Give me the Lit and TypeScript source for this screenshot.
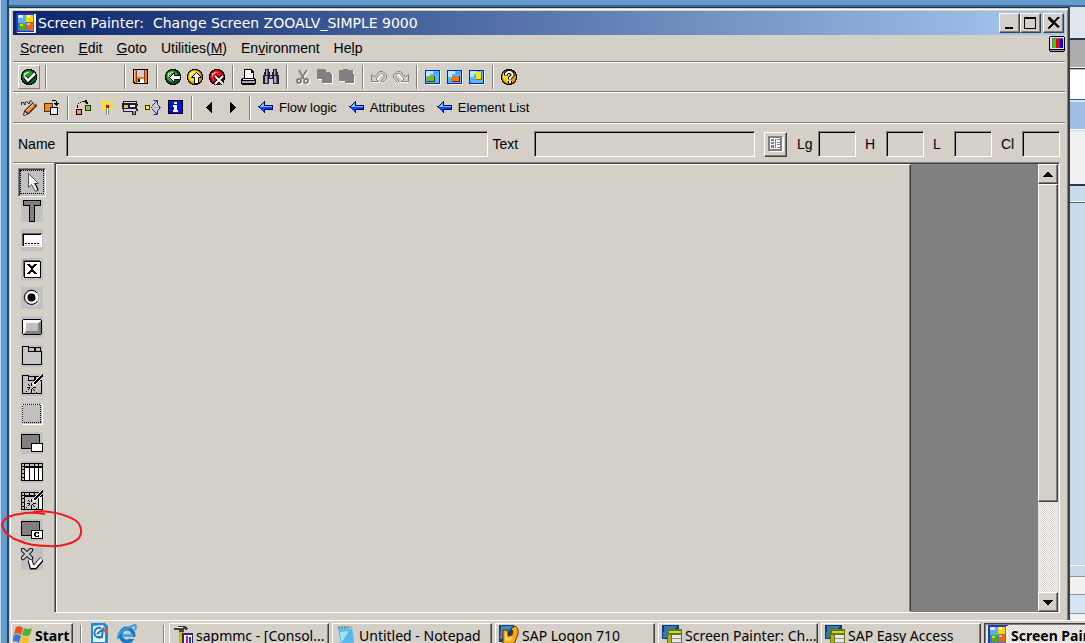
import { LitElement, html, svg, css, SVGTemplateResult, TemplateResult } from "lit";
import { customElement, property } from "lit/decorators.js";

type Glyph = { size: number; smooth?: boolean; art: SVGTemplateResult };

const ball = (dark: string, mid: string, light: string) => svg`
  <path d="M5 0h6v1h2v1h1v1h1v2h1v6h-1v2h-1v1h-1v1h-2v1H5v-1H3v-1H2v-1H1v-2H0V5h1V3h1V2h1V1h2z" fill="#000"/>
  <circle cx="8" cy="8" r="7" fill="${dark}"/>
  <circle cx="7" cy="7" r="5.5" fill="${mid}"/>
  <path d="M3 4h2v-1h3v1h-2v1h-1v1h-1v2h-1z" fill="${light}"/>`;

const framed = (inner: SVGTemplateResult) => svg`
  <path d="M15 2h1v14H2v-1h13z" fill="#fff"/>
  <path d="M0 1h15v14H0z" fill="#0020c8"/>
  <path d="M1 2h13v12H1z" fill="#58b8ff"/>
  <path d="M1 2h7v3H5v3H1z" fill="#b8e8ff"/>
  <path d="M9 4h1v1h-1zM11 3h1v1h-1zM4 10h1v1h-1zM2 12h1v1h-1zM6 7h1v1h-1z" fill="#1878e8"/>
  ${inner}`;

const tile = (inner: SVGTemplateResult) => svg`<path d="M0 0h22v22H0z" fill="#c0c0c0"/>${inner}`;

const wand = svg`
  <path d="M22 1L12 11" stroke="#fff" stroke-width="4"/>
  <path d="M22 1L13 10" stroke="#000" stroke-width="2"/>
  <path d="M10 9v3M10 15v4M6 13h3M12 13h3M7 10l2 2M7 16l2-2M12 15l2 2" stroke="#000"/>
  <path d="M8 11h1v1h-1zM11 14h1v1h-1zM5 17h1v1h-1zM15 18h1v1h-1z" fill="#000"/>`;

const sapSquares = svg`
  <path d="M0 0h20v20H0z" fill="#2038b8"/>
  <path d="M18 1h2v19H1v-1h17z" fill="#f0f0f0"/>
  <path d="M2 2h16v16H2z" fill="#4878c0"/>
  <path d="M2 2h8v8H2z" fill="#58b0f8"/><path d="M2 2h5v3H2z" fill="#d0f0ff"/>
  <path d="M10 2h7v7h-7z" fill="#ffd800"/><path d="M11 2h3v3h-3z" fill="#fff8a0"/>
  <path d="M4 10h6v7H4z" fill="#60a800"/><path d="M4 11h3v2H4z" fill="#b8e040"/>
  <path d="M11 10h6v7h-6z" fill="#ff6000"/><path d="M11 10h3v2h-3z" fill="#ffb060"/>`;

const sapWindow = svg`
  <path d="M0 0h17v14H0z" fill="#0c3c78"/><path d="M2 1h14L3 13H1z" fill="#3078b8"/>
  <path d="M5 4h15v16H5z" fill="#687800"/><path d="M7 6h12v2H7z" fill="#c8d050"/>
  <path d="M6 10h3v10H6z" fill="#a8b020"/><path d="M10 10h9v10h-9z" fill="#e8e8e8"/><path d="M10 13h9v1h-9zM10 17h9v1h-9z" fill="#909090"/>`;

const turn = svg`
  <path d="M1 6v8h8L6.500 11.500 11 6l2 2v2l-3 3 1 2 5-5V7l-4-5H9L4 9z" fill="#fff"/>
  <path d="M.5 5.500v7h7L5 10l4.500-5.500h2L13 6.500v2L10 12l1.500 1.500 4-4V6L12 2.500H8.500L3.500 8z" fill="#d4d0c8" stroke="#808080"/>`;

const glyphs: Record<string, Glyph> = {
  app: { size: 20, art: sapSquares },
  enter: { size: 16, smooth: true, art: svg`${ball("#006830", "#28a028", "#b8e8a0")}<path d="M4 8l3 4 7-7" fill="none" stroke="#000" stroke-width="4.500"/><path d="M4 8l3 3.500 7-7" fill="none" stroke="#fff" stroke-width="2.500"/>` },
  save: { size: 16, art: svg`<path d="M0 0h15v15H1v-1H0z" fill="#000"/><path d="M1 1h13v13H2v-1H1z" fill="#e88010"/><path d="M4 1h7v7H4z" fill="#d8c8e0"/><path d="M3 1h1v8h7V1h1v12h-1V9H4v4H3z" fill="#904000"/><path d="M5 10h6v4H5z" fill="#fff"/><path d="M5 10h2v3H5z" fill="#000"/><path d="M1 1h1v11H1z" fill="#ffc060"/>` },
  back: { size: 16, smooth: true, art: svg`${ball("#005838", "#38a828", "#a0e090")}<path d="M9.500 3.500v3h6v4h-6v3l-5-5z" fill="#fff" stroke="#000"/>` },
  up: { size: 16, smooth: true, art: svg`${ball("#f0a000", "#ffe000", "#fff8b0")}<path d="M9.500 3.500l5 5h-3v6h-4v-6h-3z" fill="#fff" stroke="#000"/>` },
  cancel: { size: 16, smooth: true, art: svg`${ball("#c00000", "#f01020", "#ff9090")}<path d="M6 7l8 8M14 7l-8 8" stroke="#000" stroke-width="4"/><path d="M6 7l8 8M14 7l-8 8" stroke="#fff" stroke-width="2"/>` },
  print: { size: 16, art: svg`<path d="M3 0h8v1h1v1h1v7h1v1h1v5h-1v1H1v-1H0v-5h1V9h2z" fill="#000"/><path d="M4 1h6v3h2v5H4z" fill="#fff"/><path d="M2 10h11v1H2z" fill="#f0f0f0"/><path d="M1 12h13v2H1z" fill="#a8a8c0"/>` },
  find: { size: 16, art: svg`<path d="M2 0h4v3h1v3h2V3h1V0h4v3h1v3h1v9h-6v-5H6v5H0V6h1V3h1z" fill="#202030"/><path d="M3 1h2v5H3zM11 1h2v5h-2zM2 7h3v7H2zM11 7h3v7h-3zM7 7h2v2H7z" fill="#a8a8d0"/><path d="M4 1h1v5H4zM12 1h1v5h-1zM4 7h1v7H4zM13 7h1v7h-1z" fill="#606080"/>` },
  cut: { size: 16, smooth: true, art: svg`<g transform="translate(1 1)" stroke="#fff" fill="none" stroke-width="2"><path d="M4 1l5 9M12 1L6 10"/><circle cx="4" cy="12" r="2"/><circle cx="11" cy="12" r="2"/></g><g stroke="#808080" fill="none" stroke-width="2"><path d="M4 1l5 9M12 1L6 10"/><circle cx="4" cy="12" r="2"/><circle cx="11" cy="12" r="2"/></g>` },
  copy: { size: 16, art: svg`<path d="M1 1h8v3h6l1 2v9H6v-4H1z" fill="#fff"/><path d="M0 0h8v1h1v2h4v1h1v1h1v9H5v-4H0z" fill="#808080"/>` },
  paste: { size: 16, art: svg`<path d="M1 2h14v5h1v8H7v-2H1z" fill="#fff"/><path d="M0 1h4V0h5v1h5v4h1v9H6v-2H0z" fill="#808080"/>` },
  undo: { size: 16, smooth: true, art: turn },
  redo: { size: 16, smooth: true, art: svg`<g transform="translate(16 0) scale(-1 1)">${turn}</g>` },
  viewGreen: { size: 16, art: framed(svg`<path d="M2 7h8v6H2z" fill="#284800"/><path d="M2 7h7v5H2z" fill="#88b800"/>`) },
  viewOrange: { size: 16, art: framed(svg`<path d="M5 7h8v6H5z" fill="#782000"/><path d="M5 7h7v5H5z" fill="#ff7010"/>`) },
  viewYellow: { size: 16, art: framed(svg`<path d="M7 3h6v8H7z" fill="#906000"/><path d="M7 3h5v7H7z" fill="#ffe800"/>`) },
  help: { size: 16, smooth: true, art: svg`${ball("#f09800", "#ffd820", "#fff8b0")}<path d="M5 6.500V4.500l2-1.500h2.500l2 2v1.500L9 9v1.500M9 12v2.500" fill="none" stroke="#000" stroke-width="4"/><path d="M5 6V4.500l2-1.500h2.500l2 2v1.500L9 9v1.500M9 12v2" fill="none" stroke="#fff" stroke-width="2"/>` },
  change: { size: 16, smooth: true, art: svg`<path d="M.5 5V2.500h2L4 5V2.500l2-1L8 4l1-3h2" fill="none" stroke="#202020"/><path d="M15 3l1 3-8 8-5 2-1-1 1-4 9-9z" fill="#402010"/><path d="M13 5L6 12" stroke="#f09030" stroke-width="3"/><path d="M12 4L5 11" stroke="#ffe0a0"/><path d="M4 12l2 2-3 1z" fill="#fff"/><path d="M12 3l2-1 1 2-1 1z" fill="#e8d8ff"/>` },
  otherObject: { size: 16, art: svg`<path d="M0 3h9v9H0z" fill="#5c2800"/><path d="M1 4h7v7H1z" fill="#f08820"/><path d="M6 7h8v8H6z" fill="#000"/><path d="M7 8h6v6H7z" fill="#d8f0ff"/><path d="M8 0h4v1h1v2h2v1h-1v1h-1v1h-1V5h-1V4h-1V3h2V1H8z" fill="#000"/>` },
  check: { size: 16, art: svg`<path d="M0 9h6v6H0z" fill="#000"/><path d="M1 10h4v4H1z" fill="#ff9830"/><path d="M9 5h6v6H9z" fill="#203800"/><path d="M10 6h4v4h-4z" fill="#98c040"/><path d="M1 5h1v3H1zM2 3h1v1H2zM4 2h1v1H4zM6 1h5v1H6zM9 0h1v3H9zM10 0h1v4h-1zM11 2h1v2h-1z" fill="#000"/>` },
  activate: { size: 16, art: svg`<path d="M8 0v4M3 1l3 3M13 1l-3 3M2 6h4M10 6h4M3 11l3-3M13 11l-3-3" stroke="#f8f000" stroke-width="1.500"/><path d="M7 7h3v8H7z" fill="#7090a0"/><path d="M8 8h1v7H8z" fill="#fff"/><path d="M7 5h3v3H7z" fill="#e00000"/>` },
  test: { size: 16, art: svg`<path d="M1 1h14v3h1v2h-1v3h1v2h-2v4h-4v-3H1V9H0V3h1z" fill="#202030"/><path d="M2 2h12v1H2zM2 9h12v2H2z" fill="#d8d8e8"/><path d="M2 5h4v3H2z" fill="#f8b860"/><path d="M8 5h5v2H8z" fill="#f0f0f8"/><path d="M11 11h2v3h-2z" fill="#8090b0"/>` },
  whereUsed: { size: 16, smooth: true, art: svg`<path d="M6 7.500h9M7 6l5-5M7 9l5 5M8.500 .5h4v4M8.500 14.500h4v-4M12.500 4.500l3 3-3 3" fill="none" stroke="#1828a8"/><path d="M7 7h7v1H7z" fill="#90b0f0"/><path d="M0 5h5v5H0z" fill="#303000"/><path d="M1 6h3v3H1z" fill="#fff000"/>` },
  info: { size: 16, art: svg`<path d="M0 0h15v14H0z" fill="#000"/><path d="M1 1h13v12H1z" fill="#0010e8"/><path d="M6 2h3v2H6zM5 5h4v5h1v2H5v-2h1V7H5z" fill="#fff"/>` },
  prev: { size: 16, art: svg`<path d="M11 2v11h-1v-1H9v-1H8v-1H7V9H6V8H5V7h1V6h1V5h1V4h1V3h1V2z" fill="#000"/>` },
  next: { size: 16, art: svg`<path d="M5 2v11h1v-1h1v-1h1v-1h1V9h1V8h1V7h-1V6H9V5H8V4H7V3H6V2z" fill="#000"/>` },
  arrow: { size: 16, art: svg`<path d="M7 1v4h8v5H7v3H6v-1H5v-1H4v-1H3V9H2V8H1V7H0V6h2V5h1V4h1V3h1V2h1V1z" fill="#000060"/><path d="M6 3v3h8v1H2V6h1V5h1V4h1V3z" fill="#68c8ff"/><path d="M2 7h12v2H6v3H5v-1H4v-1H3V9H2z" fill="#1040f0"/>` },
  monitor: { size: 16, art: svg`<path d="M1 0h14v1h1v14h-1v1H1v-1H0V1h1z" fill="#000"/><path d="M1 1h14v12H1z" fill="#e0e0e8"/><path d="M3 2h11v10H3z" fill="#707070"/><path d="M4 3h3v9H4z" fill="#00f000"/><path d="M7 3h4v9H7z" fill="#f00000"/><path d="M11 3h3v9h-3z" fill="#0000f0"/><path d="M1 14h14v1H1z" fill="#9898d0"/>` },
  list: { size: 16, art: svg`<path d="M1 1h15v15H1z" fill="#fff"/><path d="M0 0h14v15H0z" fill="#808080"/><path d="M2 2h10v11H2z" fill="#fff"/><path d="M3 3h3v2H3zM3 6h3v2H3zM3 9h3v3H3zM7 3h1v9H7zM9 3h3v1H9zM9 6h3v1H9zM9 8h3v1H9zM9 11h3v1H9z" fill="#808080"/>` },
  pointer: { size: 22, smooth: true, art: tile(svg`<path d="M7.500 2.500v14l3-3 4 7 2.500-1.500-3.500-6.500h4z" fill="#f8f8f8" stroke="#505050"/><path d="M14 12l3 6-1 2" fill="none" stroke="#000"/>`) },
  text: { size: 22, art: tile(svg`<path d="M2 0h18v6h-6v16H8V6H2z" fill="#000"/><path d="M3 1h16v4h-6v16H9V5H3z" fill="#808080"/>`) },
  entry: { size: 22, art: tile(svg`<path d="M1 4h20v14H1z" fill="#fff"/><path d="M1 4h20v1H2v12H1z" fill="#606060"/><path d="M2 5h18v1H3v11H2z" fill="#000"/><path d="M3 16h17v1H3z" fill="#d8d8d8"/><path d="M4 14h2v1H4zM7 14h2v1H7zM10 14h2v1h-2zM13 14h2v1h-2zM16 14h2v1h-2z" fill="#000"/>`) },
  checkbox: { size: 22, art: tile(svg`<path d="M2 2h18v18H2z" fill="#fff"/><path d="M2 2h17v1H3v16H2z" fill="#606060"/><path d="M3 3h16v16H3z" fill="none" stroke="#000"/><path d="M6 6h3v1h1v1h2V7h1V6h3v1h-1v1h-1v1h-1v1h-1v2h1v1h1v1h1v1h1v1h-3v-1h-1v-1h-2v1H9v1H6v-1h1v-1h1v-1h1v-1h1v-2H9V9H8V8H7V7H6z" fill="#000"/>`) },
  radio: { size: 22, smooth: true, art: tile(svg`<circle cx="11" cy="11" r="8" fill="#fff"/><circle cx="10.500" cy="10.500" r="7.500" fill="none" stroke="#707070"/><path d="M16 6a7 7 0 1 0 .5 8" fill="none" stroke="#000"/><circle cx="10.500" cy="10.500" r="4" fill="#000"/>`) },
  push: { size: 22, art: tile(svg`<path d="M2 3h18v1h1v14h-1v1H2v-1H1V4h1z" fill="#000"/><path d="M2 4h18v14H2z" fill="#808080"/><path d="M2 4h18l-3 3H5v8l-3 3z" fill="#fff"/><path d="M5 7h12v8H5z" fill="#c0c0c0"/>`) },
  tabs: { size: 22, art: tile(svg`<path d="M2 2h5v4h13v13H2z" fill="#c8c8c8"/><path d="M1.500 1.500h6v5h13v13h-19zM8 2.500h5v4M14.500 6V2.500h5v4" fill="none" stroke="#000"/>`) },
  tabsWizard: { size: 22, art: tile(svg`<path d="M1.500 1.500h6v5h13v13h-19zM8 2.500h5v4M14.500 6V2.500h5v4" fill="none" stroke="#000"/>${wand}`) },
  group: { size: 22, art: tile(svg`<path d="M1 1h20v20H1z" fill="#c0c0c0" stroke="#fff"/><path d="M1.500 1.500h18v18h-18z" fill="none" stroke="#000" stroke-dasharray="1 1"/>`) },
  subscreen: { size: 22, art: tile(svg`<path d="M0 2h19v15H0z" fill="#000"/><path d="M1 3h17v13H1z" fill="#808080"/><path d="M10 11h12v9H10z" fill="#000"/><path d="M11 12h10v7H11z" fill="#fff"/>`) },
  table: { size: 22, art: tile(svg`<path d="M0 2h22v18H0z" fill="#000"/><path d="M1 3h2v2H1zM4 3h4v2H4zM9 3h4v2H9zM14 3h3v2h-3zM18 3h3v2h-3zM1 6h2v2H1zM1 9h2v3H1zM1 13h2v3H1zM1 17h2v2H1z" fill="#c0c0c0"/><path d="M4 7h4v12H4zM9 7h4v12H9zM14 7h3v12h-3zM18 7h3v12h-3z" fill="#fff"/>`) },
  tableWizard: { size: 22, art: tile(svg`<path d="M0 2h22v18H0z" fill="#000"/><path d="M1 3h2v2H1zM4 3h4v2H4zM9 3h4v2H9zM14 3h3v2h-3zM1 6h2v2H1zM1 9h2v3H1zM1 13h2v3H1zM1 17h2v2H1z" fill="#c0c0c0"/><path d="M4 7h13v12H4z" fill="#c8c8c8"/><path d="M18 7h3v12h-3z" fill="#fff"/>${wand}`) },
  custom: { size: 22, art: tile(svg`<path d="M0 2h19v15H0z" fill="#000"/><path d="M1 3h17v13H1z" fill="#808080"/><path d="M10 11h12v9H10z" fill="#000"/><path d="M11 12h10v7H11z" fill="#fff"/><path d="M14 13h4v2h-1v-1h-2v3h2v-1h1v2h-4v-1h-1v-3h1z" fill="#000"/>`) },
  status: { size: 22, smooth: true, art: tile(svg`<path d="M2 2l8 8M10 2l-8 8" stroke="#000" stroke-width="4.500" stroke-linecap="round"/><path d="M2 2l8 8M10 2l-8 8" stroke="#c8c8c8" stroke-width="2.500" stroke-linecap="round"/><path d="M9 12l2 7h3l7-8" fill="none" stroke="#000" stroke-width="5"/><path d="M9 12l2 6.500h3l6.500-7.500" fill="none" stroke="#fff" stroke-width="3"/>`) },
  flag: { size: 20, smooth: true, art: svg`<path d="M3 2q4-2 7 1L8 10Q5 7 1 9z" fill="#e85020"/><path d="M11 3q4 2 8 0l-2 7q-4 2-8 0z" fill="#58b030"/><path d="M1 10q4-2 7 1l-2 7q-3-3-7-1z" fill="#3878e0"/><path d="M9 11q4 2 8 0l-2 7q-4 2-8 0z" fill="#f8c020"/>` },
  desktop: { size: 20, smooth: true, art: svg`<path d="M2 0h14l3 3v17H2z" fill="#2888d8"/><path d="M4 3l10-1 2 3v14H4z" fill="#e8f4ff"/><path d="M12 5a5 5 0 1 0 1 9M8 11l6-5-1 8H8" fill="none" stroke="#2078c8" stroke-width="2"/><path d="M14 5l5 2-3 4z" fill="#e06020"/>` },
  explorer: { size: 20, smooth: true, art: svg`<circle cx="10" cy="12" r="6.500" fill="none" stroke="#1878c8" stroke-width="4"/><path d="M5 11h11v3H5z" fill="#40a8e8"/><path d="M13 14h6v2h-6z" fill="#d4d0c8"/><path d="M1 16Q-1 8 18 2q2 1 0 5" fill="none" stroke="#38a0e0" stroke-width="2"/>` },
  console: { size: 20, art: svg`<path d="M1 3h3l1-2h8l2 3-2 1-2-1v3H6V5H1z" fill="#404040"/><path d="M4 2h6v1H4z" fill="#fff"/><path d="M6 7h5v13H6z" fill="#d0b800"/><path d="M9 8h11v12H9z" fill="#302860"/><path d="M11 10h8v10h-8z" fill="#f0f0ff"/><path d="M13 11h2v9h-2z" fill="#d01878"/><path d="M16 12h2v8h-2z" fill="#2040c0"/>` },
  notepad: { size: 20, smooth: true, art: svg`<path d="M2 2l14-1 2 17-13 3z" fill="#58b8e8"/><path d="M2 2l14-1v3L3 5z" fill="#90c0d8"/><path d="M4 7l9-1-8 12z" fill="#a0e0ff"/><path d="M3 1v3M6 1v3M9 1v3M12 1v2" stroke="#407888"/>` },
  logon: { size: 20, smooth: true, art: svg`<path d="M0 0h15v17H0z" fill="#0c4080"/><path d="M2 1h12L3 14H1z" fill="#4088c0"/><path d="M4 5h5v6l4-1 1-4-2-2 4-3q4 2 3 8l-3 8-4 3H4z" fill="#f8a810" stroke="#603000"/><path d="M6 7h2v6l6-1-3 4H6z" fill="#ffd860"/>` },
  windows: { size: 20, art: sapWindow },
  minimize: { size: 16, art: svg`<path d="M3 12h8v2H3z" fill="#000"/>` },
  maximize: { size: 16, art: svg`<path d="M1 2h12v12H1zm1 2v9h10V4z" fill="#000" fill-rule="evenodd"/>` },
  close: { size: 16, art: svg`<path d="M2 2h2v1h1v1h1v1h1v1h1V5h1V4h1V3h1V2h2v1h-1v1h-1v1h-1v1h-1v1H9v1h1v1h1v1h1v1h1v1h-2v-1h-1v-1H9v-1H8V9H7v1H6v1H5v1H4v1H2v-1h1v-1h1v-1h1V9h1V8h0V7H5V6H4V5H3V4H2z" fill="#000" stroke="#000" stroke-width=".6"/>` },
  scrollUp: { size: 16, art: svg`<path d="M7 6h2v1h1v1h1v1h1v1h1v1H3v-1h1V9h1V8h1V7h1z" fill="#000"/>` },
  scrollDown: { size: 16, art: svg`<path d="M3 6h10v1h-1v1h-1v1h-1v1H9v1H7v-1H6V9H5V8H4V7H3z" fill="#000"/>` },
};

@customElement("px-icon")
export class PxIcon extends LitElement {
  @property() name = "";
  static styles = css`
    :host { display: block; flex: none; }
    svg { display: block; }
  `;
  render() {
    const g = glyphs[this.name];
    return html`<svg width=${g.size} height=${g.size} viewBox="0 0 ${g.size} ${g.size}" shape-rendering=${g.smooth ? "auto" : "crispEdges"} aria-hidden="true">${g.art}</svg>`;
  }
}

const menus: [string, string, string][] = [
  ["", "S", "creen"], ["", "E", "dit"], ["", "G", "oto"],
  ["Utilities(", "M", ")"], ["En", "v", "ironment"], ["He", "l", "p"],
];

const standardGroups = [
  ["save"], ["back", "up", "cancel"], ["print", "find"], ["cut", "copy", "paste"],
  ["undo", "redo"], ["viewGreen", "viewOrange", "viewYellow"], ["help"],
];

const palette = [
  "pointer", "text", "entry", "checkbox", "radio", "push", "tabs", "tabsWizard",
  "group", "subscreen", "table", "tableWizard", "custom", "status",
];

const tasks: [string, string][] = [
  ["console", "sapmmc - [Consol..."], ["notepad", "Untitled - Notepad"], ["logon", "SAP Logon 710"],
  ["windows", "Screen Painter: Ch..."], ["windows", "SAP Easy Access"], ["app", "Screen Painter: Ch..."],
];

/* Bands of the window behind, top to bottom; a height of 0 takes the free space. */
const bands: [number, string][] = [
  [31, "#dfe7ef"], [2, "#333350"], [27, "#adadad"], [1, "#ffffff"], [1, "#333350"], [1, "#c0c0c8"],
  [29, "#ffffff"], [1, "#306090"], [2, "#dce4e8"], [27, "#a1bde3"], [1, "#ffffff"], [1, "#d0d8d8"],
  [53, "#f1f1f1"], [2, "#333350"], [15, "#cbdaea"], [1, "#ffffff"], [1, "#3070a0"], [0, "#cbdaea"],
  [1, "#ffffff"], [10, "#cbdaea"], [1, "#909098"], [17, "#f1f1f1"], [1, "#909098"], [18, "#d7e4f4"],
  [1, "#909098"], [6, "#f1f1f1"],
];

@customElement("app-root")
export class AppRoot extends LitElement {
  static styles = css`
    :host {
      --face: #d4d0c8;
      --shade: #808080;
      --deep: #404040;
      display: grid;
      grid-template: 7px minmax(0, 1fr) 23px / 9px minmax(0, 1fr) 15px;
      position: relative;
      height: 100vh;
      overflow: hidden;
      background: var(--face);
      color: #000;
      font: 13px/16px "Liberation Sans", Arial, sans-serif;
    }
    * { box-sizing: border-box; }
    button, input { font: inherit; color: inherit; margin: 0; padding: 0; border: 0; border-radius: 0; background: none; outline: none; }
    .desk-top { grid-area: 1 / 1 / 2 / 4; background: #6699cc; border-bottom: 2px solid #336699; }
    .desk-left { grid-area: 1 / 1 / 4 / 2; background: #6699cc; border-left: 1px solid #bcd8f0; border-right: 2px solid #204870; }
    .behind { grid-area: 2 / 3 / 3 / 4; display: flex; flex-direction: column; }
    .band { flex: none; }
    .band.fill { flex: 1; }

    .window {
      grid-area: 2 / 2 / 3 / 3;
      display: flex;
      flex-direction: column;
      border-top: 1px solid #203850;
      border-right: 2px solid var(--deep);
      box-shadow: inset 1px 1px var(--face), inset 2px 2px #fff, inset -1px 0 #808080;
      padding: 3px 3px 0 4px;
    }
    .title {
      display: flex;
      align-items: center;
      height: 24px;
      padding: 0 1px 0 3px;
      background: linear-gradient(90deg, #0a246a, #a6caf0);
      color: #fff;
      white-space: pre;
    }
    .title h1 { flex: 1; margin: 0; padding-left: 2px; font: 14px/20px "DejaVu Sans", Verdana, sans-serif; }
    .raised {
      display: flex;
      justify-content: center;
      align-items: center;
      flex: none;
      background: var(--face);
      border: 1px solid;
      border-color: #fff var(--deep) var(--deep) #fff;
      box-shadow: inset -1px -1px var(--shade);
    }
    .cap { width: 21px; height: 20px; }
    .cap.close { margin-left: 2px; }

    .menubar { display: flex; height: 26px; padding-left: 7px; }
    .menu { display: flex; flex: 1; gap: 14px; align-items: center; font-size: 14px; }
    .menu button { height: 16px; }
    .status { padding-top: 1px; height: 17px; }
    .bar {
      display: flex;
      align-items: center;
      height: 31px;
      padding: 1px 0 0 8px;
      border-top: 1px solid var(--shade);
      box-shadow: inset 0 1px #fff;
    }
    .bar.top { height: 30px; padding-left: 5px; }
    .tools { display: flex; align-items: center; gap: 6px; }
    .tools.wide { gap: 7px; }
    .tools.steps { gap: 8px; padding: 0 1px; }
    .ok {
      width: 22px; height: 24px;
      display: flex; align-items: center; justify-content: center;
      border: 1px solid; border-color: #fff var(--shade) var(--shade) #fff;
    }
    .sep { flex: none; width: 2px; height: 24px; margin: 0 7px; border-left: 1px solid var(--shade); border-right: 1px solid #fff; }
    .sep.tight { margin-left: 5px; margin-right: 0; }
    .sep.after { margin-left: 0; }
    .command { width: 77px; height: 22px; }
    .link { display: flex; align-items: center; gap: 5px; margin-right: 12px; }

    .fields { display: flex; align-items: center; height: 40px; padding: 3px 5px 0 5px; border-top: 1px solid var(--shade); box-shadow: inset 0 1px #fff; }
    .fields input {
      width: 38px; height: 26px; min-width: 0;
      border: 1px solid; border-color: var(--shade) #fff #fff var(--shade);
      box-shadow: inset 1px 1px #000;
    }
    .fields .grow-2 { flex: 423 1 0; }
    .fields .grow-1 { flex: 220 1 0; }
    .fields label { flex: none; width: 21px; margin-left: 9px; font-size: 14px; }
    .fields label.name { width: 48px; margin-left: 0; }
    .fields label.text { width: 42px; margin-left: 4px; }
    .fields .raised { width: 23px; height: 25px; margin: 0 1px 0 9px; }

    .work { display: flex; flex: 1; min-height: 0; padding-right: 5px; }
    .palette { width: 41px; border-top: 1px solid var(--shade); box-shadow: inset 0 1px #fff; padding: 5px 0 0 5px; }
    .palette button { display: flex; justify-content: center; width: 28px; height: 29px; padding-top: 3px; }
    .palette .picked {
      border: 1px solid; border-color: var(--shade) #fff #fff var(--shade);
      box-shadow: inset 1px 1px var(--deep);
      background: #c0c0c0;
      padding-top: 2px;
    }
    .palette .picked px-icon { height: 22px; outline: 1px dotted #000; }
    .frame {
      display: flex; flex: 1; min-width: 0;
      margin-bottom: 7px;
      border: 1px solid; border-color: var(--shade) #fff #fff var(--shade);
      box-shadow: inset 1px 1px var(--deep);
      padding: 1px 1px 0 1px;
    }
    .sheet { flex: 1; border: 1px solid; border-color: #fff var(--deep) var(--face) #fff; box-shadow: inset -1px 0 var(--shade); }
    .void { width: 127px; background: #808080; }
    .scroll {
      display: flex; flex-direction: column; width: 20px;
      background: repeating-conic-gradient(#fff 0 25%, #d4d0c8 0 50%) 0 0 / 2px 2px;
    }
    .scroll button { height: 20px; }
    .thumb { flex: 317 1 0; }
    .track { flex: 90 1 0; }

    .taskbar {
      grid-area: 3 / 2 / 4 / 4;
      display: flex;
      align-items: flex-start;
      min-width: 0;
      height: 23px;
      overflow: hidden;
      border-top: 1px solid #fff;
      padding: 2px 0 0 2px;
      background: var(--face);
      font: 14px/14px "Noto Sans", sans-serif;
      white-space: nowrap;
    }
    .taskbar .raised { justify-content: flex-start; align-items: flex-start; height: 26px; padding: 1px 3px; gap: 3px; }
    .caption { padding-top: 4px; }
    .taskbar .start { width: 62px; padding: 1px; gap: 2px; font-weight: bold; }
    .quick { display: flex; flex: none; gap: 8px; padding-left: 7px; width: 81px; }
    .taskbar .sep { margin: 2px 0 0 7px; }
    .taskbar .sep.last { margin: 2px 4px 0 0; }
    .tasks { display: flex; gap: 3px; }
    .task { width: 160px; }
    .task.on {
      border-color: var(--deep) #fff #fff var(--deep);
      box-shadow: inset 1px 1px var(--shade);
      background: repeating-conic-gradient(#fff 0 25%, #d4d0c8 0 50%) 0 0 / 2px 2px;
      font-weight: bold;
    }
    .mark { position: absolute; left: 0; top: 506px; pointer-events: none; }
  `;

  private tool(name: string): TemplateResult {
    return html`<button aria-label=${name}><px-icon name=${name}></px-icon></button>`;
  }

  private field(id: string, label: string): TemplateResult {
    return html`<label for=${id}>${label}</label><input id=${id} type="text" />`;
  }

  render() {
    return html`
      <div class="desk-top"></div>
      <div class="desk-left"></div>
      <div class="behind">
        ${bands.map(([h, c]) => html`<div class="band ${h ? "" : "fill"}" style="height:${h}px;background:${c}"></div>`)}
      </div>
      <main class="window">
        <header class="title">
          <px-icon name="app"></px-icon>
          <h1>Screen Painter:  Change Screen ZOOALV_SIMPLE 9000</h1>
          <button class="raised cap" aria-label="Minimize"><px-icon name="minimize"></px-icon></button>
          <button class="raised cap" aria-label="Maximize"><px-icon name="maximize"></px-icon></button>
          <button class="raised cap close" aria-label="Close"><px-icon name="close"></px-icon></button>
        </header>
        <div class="menubar">
          <nav class="menu">${menus.map(([a, k, b]) => html`<button>${a}<u>${k}</u>${b}</button>`)}</nav>
          <div class="status"><px-icon name="monitor"></px-icon></div>
        </div>
        <div class="bar top">
          <button class="ok" aria-label="Enter"><px-icon name="enter"></px-icon></button>
          <span class="sep tight"></span>
          <input class="command" type="text" aria-label="Command" />
          ${standardGroups.map((g, i) => html`<span class="sep ${i ? "" : "after"}"></span><div class="tools">${g.map((n) => this.tool(n))}</div>`)}
        </div>
        <div class="bar">
          <div class="tools wide">${["change", "otherObject"].map((n) => this.tool(n))}</div>
          <span class="sep"></span>
          <div class="tools wide">${["check", "activate", "test", "whereUsed", "info"].map((n) => this.tool(n))}</div>
          <span class="sep"></span>
          <div class="tools steps">${["prev", "next"].map((n) => this.tool(n))}</div>
          <span class="sep"></span>
          ${["Flow logic", "Attributes", "Element List"].map((t) => html`<button class="link"><px-icon name="arrow"></px-icon>${t}</button>`)}
        </div>
        <form class="fields">
          <label for="name" class="name">Name</label><input id="name" type="text" class="grow-2" />
          <label for="text" class="text">Text</label><input id="text" type="text" class="grow-1" />
          <button type="button" class="raised" aria-label="List"><px-icon name="list"></px-icon></button>
          ${this.field("lg", "Lg")}${this.field("h", "H")}${this.field("l", "L")}${this.field("cl", "Cl")}
        </form>
        <section class="work">
          <div class="palette">
            ${palette.map((n, i) => html`<button class=${i ? "" : "picked"} aria-label=${n}><px-icon name=${n}></px-icon></button>`)}
          </div>
          <div class="frame">
            <div class="sheet"></div>
            <div class="void"></div>
            <div class="scroll">
              <button class="raised" aria-label="Scroll up"><px-icon name="scrollUp"></px-icon></button>
              <div class="thumb raised"></div>
              <div class="track"></div>
              <button class="raised" aria-label="Scroll down"><px-icon name="scrollDown"></px-icon></button>
            </div>
          </div>
        </section>
      </main>
      <footer class="taskbar">
        <button class="raised start"><px-icon name="flag"></px-icon><span class="caption">Start</span></button>
        <span class="sep"></span>
        <div class="quick">
          <button aria-label="Show desktop"><px-icon name="desktop"></px-icon></button>
          <button aria-label="Internet Explorer"><px-icon name="explorer"></px-icon></button>
        </div>
        <span class="sep last"></span>
        <div class="tasks">
          ${tasks.map(([n, t], i) => html`<button class="raised task ${i === tasks.length - 1 ? "on" : ""}"><px-icon name=${n}></px-icon><span class="caption">${t}</span></button>`)}
        </div>
      </footer>
      <svg class="mark" width="90" height="44" viewBox="0 0 90 44" aria-hidden="true">
        <path d="M45 8C38 7 28 6 20 8C10 9 3 13 2 19C4 27 12 33 20 35C28 39 38 40 48 40C62 41 74 37 79 32C83 26 81 18 75 14C66 9 58 7 50 6C44 5 38 5 33 6" fill="none" stroke="#f01818" stroke-width="2"/>
      </svg>
    `;
  }
}
